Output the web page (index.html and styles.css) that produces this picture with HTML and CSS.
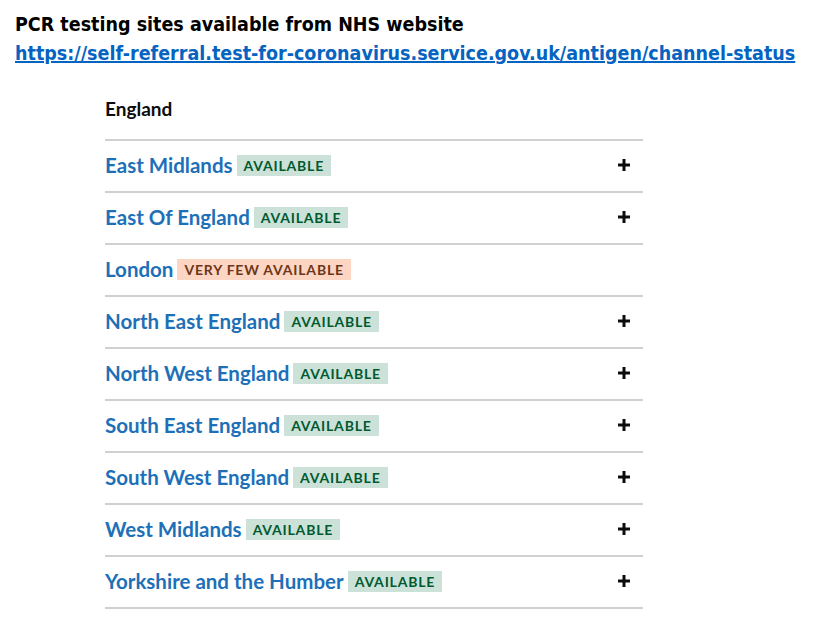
FILE: index.html
```html
<!DOCTYPE html>
<html lang="en">
<head>
    <meta charset="UTF-8">
    <title>PCR testing sites</title>
    <link rel="stylesheet" href="styles.css">
</head>
<body>
    <div class="intro">
        <div class="intro__title">PCR testing sites available from NHS website</div>
        <a class="intro__link" href="#">https://self-referral.test-for-coronavirus.service.gov.uk/antigen/channel-status</a>
    </div>

    <div class="status">
        <h2 class="status__country">England</h2>
        <ul class="status__list">
            <li class="region">
                <span class="region__name">East Midlands</span>
                <span class="tag tag--green">Available</span>
                <svg class="region__plus" viewBox="0 0 14 14"><path d="M7 1v12M1 7h12"/></svg>
            </li>
            <li class="region">
                <span class="region__name">East Of England</span>
                <span class="tag tag--green">Available</span>
                <svg class="region__plus" viewBox="0 0 14 14"><path d="M7 1v12M1 7h12"/></svg>
            </li>
            <li class="region">
                <span class="region__name">London</span>
                <span class="tag tag--orange">Very few available</span>
            </li>
            <li class="region">
                <span class="region__name">North East England</span>
                <span class="tag tag--green">Available</span>
                <svg class="region__plus" viewBox="0 0 14 14"><path d="M7 1v12M1 7h12"/></svg>
            </li>
            <li class="region">
                <span class="region__name">North West England</span>
                <span class="tag tag--green">Available</span>
                <svg class="region__plus" viewBox="0 0 14 14"><path d="M7 1v12M1 7h12"/></svg>
            </li>
            <li class="region">
                <span class="region__name">South East England</span>
                <span class="tag tag--green">Available</span>
                <svg class="region__plus" viewBox="0 0 14 14"><path d="M7 1v12M1 7h12"/></svg>
            </li>
            <li class="region">
                <span class="region__name">South West England</span>
                <span class="tag tag--green">Available</span>
                <svg class="region__plus" viewBox="0 0 14 14"><path d="M7 1v12M1 7h12"/></svg>
            </li>
            <li class="region">
                <span class="region__name">West Midlands</span>
                <span class="tag tag--green">Available</span>
                <svg class="region__plus" viewBox="0 0 14 14"><path d="M7 1v12M1 7h12"/></svg>
            </li>
            <li class="region">
                <span class="region__name">Yorkshire and the Humber</span>
                <span class="tag tag--green">Available</span>
                <svg class="region__plus" viewBox="0 0 14 14"><path d="M7 1v12M1 7h12"/></svg>
            </li>
        </ul>
    </div>
</body>
</html>
```

FILE: styles.css
```css
html {
    box-sizing: border-box;
}
*, *::before, *::after {
    box-sizing: inherit;
}
body {
    margin: 0;
    background: #fff;
    color: #0b0c0c;
    font-family: Lato, "Noto Sans", Arial, sans-serif;
}
.intro {
    padding: 10px 15px 0;
    font-family: "DejaVu Sans", Arial, sans-serif;
    font-stretch: condensed;
    font-weight: bold;
    font-size: 19.5px;
    line-height: 29px;
    white-space: nowrap;
}
.intro__title {
    color: #000;
}
.intro__link {
    color: #0563c1;
    text-decoration: underline;
    text-decoration-thickness: 2px;
}
.status {
    width: 538px;
    margin: 29px 0 0 105px;
}
.status__country {
    margin: 0;
    font-size: 19px;
    line-height: 24px;
    font-weight: bold;
    padding-bottom: 18px;
    border-bottom: 2px solid #d0d0d0;
}
.status__list {
    list-style: none;
    margin: 0;
    padding: 0;
}
.region {
    display: flex;
    align-items: center;
    height: 52px;
    padding-bottom: 2px;
    border-bottom: 2px solid #d0d0d0;
}
.region__name {
    color: #1d70b8;
    font-size: 20.5px;
    font-weight: bold;
    margin-right: 4px;
}
.tag {
    font-size: 14px;
    font-weight: bold;
    line-height: 21px;
    padding: 0 7px;
    letter-spacing: 0.8px;
    text-transform: uppercase;
}
.tag--green {
    background: #cce2d8;
    color: #005a30;
}
.tag--orange {
    background: #fcd6c3;
    color: #6e3619;
}
.region__plus {
    margin-left: auto;
    margin-right: 12px;
    width: 14px;
    height: 14px;
    stroke: #0b0c0c;
    stroke-width: 3;
}
```
